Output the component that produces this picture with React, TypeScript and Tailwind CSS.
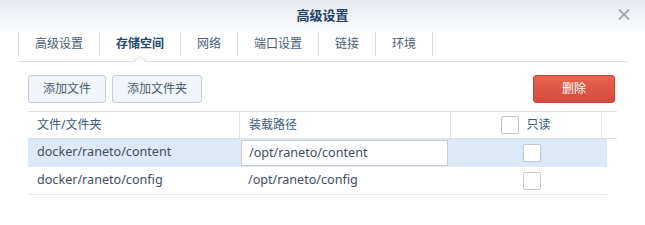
import React from "react";

const tabs = ["高级设置", "存储空间", "网络", "端口设置", "链接", "环境"];

const rows = [
  { folder: "docker/raneto/content", path: "/opt/raneto/content", selected: true },
  { folder: "docker/raneto/config", path: "/opt/raneto/config", selected: false },
];

function Checkbox() {
  return <div className="w-[18px] h-[18px] border border-[#bfc8d4] bg-white rounded-[2px]" />;
}

export default function App() {
  return (
    <div
      className="relative w-[645px] h-[225px] bg-white overflow-hidden text-[#3f4e60]"
      style={{ fontFamily: '"Noto Sans", "Noto Sans CJK SC", sans-serif' }}
    >
      {/* Title bar */}
      <div className="relative h-[32px] bg-gradient-to-b from-[#e6ebf1] to-[#fbfcfd] flex items-center justify-center">
        <span className="text-[13px] font-bold text-[#1f4169] leading-none -mt-[1px]">高级设置</span>
        <svg
          className="absolute left-[618px] top-[9px]"
          width="12"
          height="11"
          viewBox="0 0 12 11"
        >
          <path d="M1 0.5 L11 10.5 M11 0.5 L1 10.5" stroke="#a3a8ae" strokeWidth="1.8" />
        </svg>
      </div>

      {/* Tabs */}
      <div className="flex h-[24px] ml-[18px]">
        {tabs.map((t, i) => (
          <div
            key={t}
            className={
              "flex items-center px-[16px] text-[12px] border-l border-[#d6dee8] " +
              (i === tabs.length - 1 ? "border-r " : "") +
              (i === 1 ? "font-bold text-[#24486f]" : "text-[#4b5d72]")
            }
          >
            {t}
          </div>
        ))}
      </div>

      {/* Tab underline with caret */}
      <div className="relative ml-[18px] w-[610px] h-[6px] border-b border-[#dfe4ea]">
        <svg className="absolute left-[115px] top-[0px]" width="14" height="7" viewBox="0 0 14 7">
          <path d="M0 6.5 L7 0.5 L14 6.5" fill="white" stroke="#d3d9e1" strokeWidth="1" />
          <rect x="1" y="6" width="12" height="1" fill="white" />
        </svg>
      </div>

      {/* Toolbar */}
      <div className="flex items-center mt-[13px] ml-[28px] w-[587px] h-[28px]">
        <button className="h-[28px] w-[78px] rounded-[3px] border border-[#c6cfda] bg-[#f1f4f8] text-[12px] text-[#4d5e72]">
          添加文件
        </button>
        <button className="ml-[6px] h-[28px] w-[90px] rounded-[3px] border border-[#c6cfda] bg-[#f1f4f8] text-[12px] text-[#4d5e72]">
          添加文件夹
        </button>
        <button className="ml-auto h-[28px] w-[82px] rounded-[3px] border border-[#c9443b] bg-gradient-to-b from-[#e7634f] to-[#d44a3d] text-[12px] text-white">
          删除
        </button>
      </div>

      {/* Table */}
      <div className="ml-[28px] mt-[8px]">
        <div className="flex w-[589px] h-[28px] border-t border-b border-[#dde3ea] text-[12px] text-[#3c5a7c]">
          <div className="w-[211px] flex items-center pl-[9px]">文件/文件夹</div>
          <div className="w-[211px] flex items-center pl-[9px] border-l border-[#dde3ea]">装载路径</div>
          <div className="w-[152px] flex items-center justify-center gap-[7px] border-l border-r border-[#dde3ea]">
            <Checkbox />
            <span>只读</span>
          </div>
        </div>
        {rows.map((r) => (
          <div
            key={r.folder}
            className={
              "flex w-[579px] h-[28px] border-b border-[#e6eaef] text-[12.6px] " +
              (r.selected ? "bg-[#dde9f9]" : "bg-white")
            }
          >
            <div className="w-[211px] flex items-center pl-[9px]">{r.folder}</div>
            <div className="w-[211px] flex items-center">
              {r.selected ? (
                <div className="ml-[2px] w-[207px] h-[26px] mt-[1px] flex items-center pl-[7px] bg-white border border-[#c7cdd5]">
                  {r.path}
                </div>
              ) : (
                <span className="pl-[9px]">{r.path}</span>
              )}
            </div>
            <div className="flex-1 flex items-center justify-center pl-[6px]">
              <Checkbox />
            </div>
          </div>
        ))}
      </div>
    </div>
  );
}
